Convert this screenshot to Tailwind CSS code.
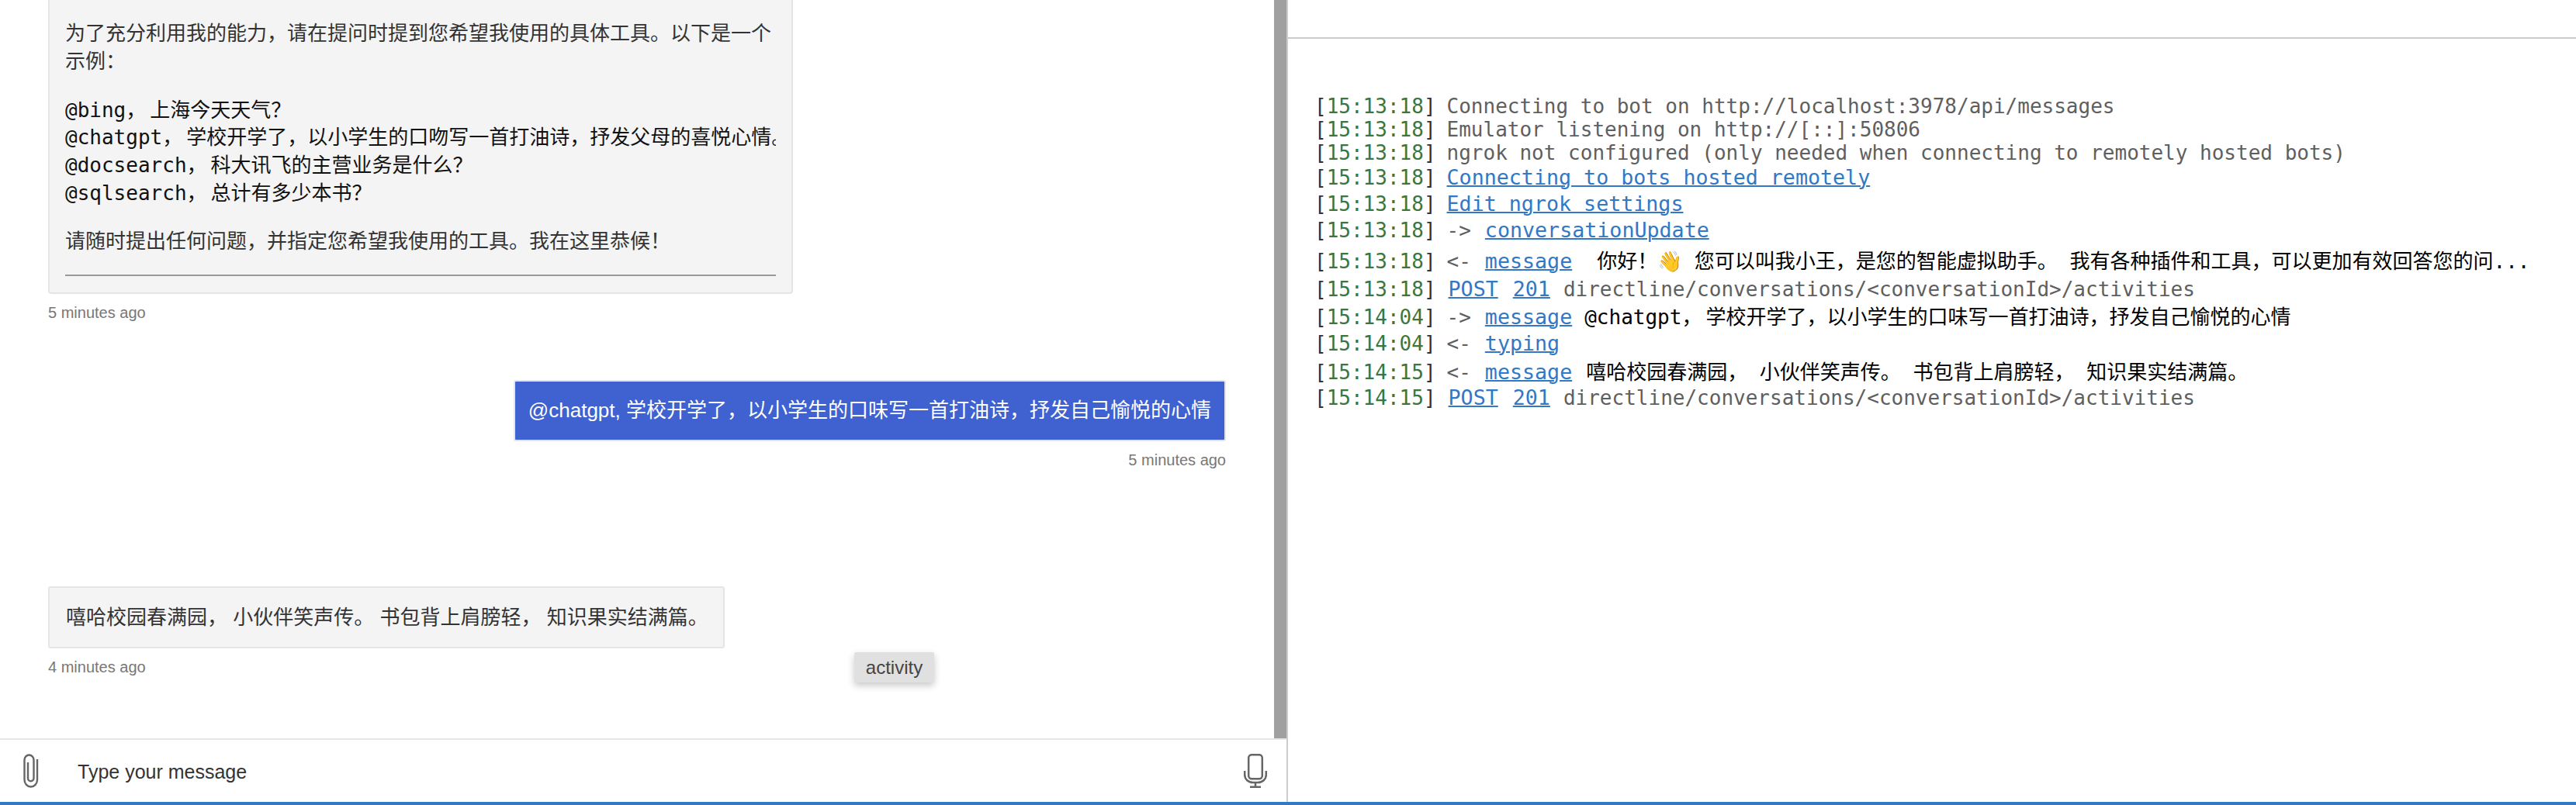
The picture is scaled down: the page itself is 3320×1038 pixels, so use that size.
<!DOCTYPE html>
<html lang="zh">
<head>
  <meta charset="UTF-8">
  <title>Bot Framework Emulator</title>
  <script src="https://cdn.jsdelivr.net/npm/@tailwindcss/browser@4"></script>
</head>
<body class="bg-white h-[1038px] w-[3320px] overflow-hidden flex flex-col font-['Liberation_Sans','Noto_Sans_CJK_SC',sans-serif] text-[#333]">
  <div class="flex flex-1 min-h-0">

    <!-- chat -->
    <div class="w-[1660px] shrink-0 flex flex-col border-r-2 border-[#ccc]">
      <div class="flex-1 min-h-0 flex">
        <div class="relative flex-1 min-w-0 px-[62px] overflow-hidden">
          <div class="border-x-2 border-b-2 border-[#e5e5e5] rounded-b-[4px] bg-[#f4f4f4] w-[960px] pl-[20px] pr-[20px] pt-[25px] pb-[21px] text-[26px] leading-[36.4px]">
            <p>为了充分利用我的能力，请在提问时提到您希望我使用的具体工具。以下是一个示例：</p>
            <div class="mt-[27px] overflow-hidden leading-[35.6px] font-['DejaVu_Sans_Mono','Noto_Sans_CJK_SC',monospace] text-[26px] text-[#111] whitespace-nowrap">
              <div class="flex"><span>@bing</span><span class="w-[31px] shrink-0">，</span><span>上海今天天气？</span></div>
              <div class="flex"><span>@chatgpt</span><span class="w-[31px] shrink-0">，</span><span>学校开学了，以小学生的口吻写一首打油诗，抒发父母的喜悦心情。</span></div>
              <div class="flex"><span>@docsearch</span><span class="w-[31px] shrink-0">，</span><span>科大讯飞的主营业务是什么？</span></div>
              <div class="flex"><span>@sqlsearch</span><span class="w-[31px] shrink-0">，</span><span>总计有多少本书？</span></div>
            </div>
            <p class="mt-[26px]">请随时提出任何问题，并指定您希望我使用的工具。我在这里恭候！</p>
            <hr class="mt-[24px] border-t-2 border-[#999]">
          </div>
          <div class="mt-[12px] text-[20px] leading-[24px] text-[#777]">5 minutes ago</div>

          <div class="mt-[75px] flex justify-end">
            <div class="border-2 border-[#e5e5e5] rounded-[3px] bg-[#3f62d0] text-white px-[17px] py-[18px] text-[26px] leading-[39px] whitespace-nowrap">@chatgpt, 学校开学了，以小学生的口味写一首打油诗，抒发自己愉悦的心情</div>
          </div>
          <div class="mt-[12px] text-[20px] leading-[24px] text-[#777] text-right">5 minutes ago</div>

          <div class="mt-[151px] inline-block border-2 border-[#e5e5e5] rounded-[3px] bg-[#f4f4f4] pl-[21px] pr-[19px] py-[18px] text-[26px] leading-[40px]">嘻哈校园春满园， 小伙伴笑声传。 书包背上肩膀轻， 知识果实结满篇。</div>
          <div class="mt-[12px] text-[20px] leading-[24px] text-[#777]">4 minutes ago</div>

          <div class="absolute left-[1101px] top-[841px] w-[103px] h-[39px] flex items-center justify-center bg-[#e0e0e0] rounded-[2px] shadow-[0_4px_10px_rgba(0,0,0,0.22)] text-[24px] text-[#444]">activity</div>
        </div>
        <div class="w-[16px] shrink-0 bg-[#a0a0a0]"></div>
      </div>

      <div class="h-[82px] shrink-0 border-t-2 border-[#e5e5e5] flex items-center">
        <svg class="ml-[30px] w-[20px] h-[44px] shrink-0" viewBox="0 0 20 44" fill="none" stroke="#666" stroke-width="2.4">
          <path d="M18 7V33.5A8.25 9 0 0 1 1.5 33.5V8A6 6.5 0 0 1 13.5 8V31.5A3.75 3.75 0 0 1 6 31.5V11"/>
        </svg>
        <div class="ml-[50px] flex-1 text-[25px] text-[#333] mt-[4px]">Type your message</div>
        <svg class="mr-[25px] w-[30px] h-[44px] shrink-0" viewBox="0 0 30 44" fill="none" stroke="#666" stroke-width="2.5">
          <rect x="6.2" y="1.2" width="17.6" height="31" rx="4"/>
          <path d="M1.2 22V27C1.2 33 6 37 12 37H18C24 37 28.8 33 28.8 27V22M15 37V42.5M8 42.7H22"/>
        </svg>
      </div>
    </div>

    <!-- log -->
    <div class="flex-1 min-w-0 flex flex-col">
      <div class="h-[50px] shrink-0 border-b-2 border-[#ccc]"></div>
      <div class="pl-[34px] pt-[72px] text-[26px] font-['DejaVu_Sans_Mono','Noto_Sans_CJK_SC',monospace] text-[#5f5f5f]">
        <div class="flex items-center h-[30px] whitespace-pre">
          <span class="text-[#333]">[<span class="text-[#3c763d]">15:13:18</span>]</span>
          <span class="ml-[14px]">Connecting to bot on http://localhost:3978/api/messages</span>
        </div>
        <div class="flex items-center h-[30px] whitespace-pre">
          <span class="text-[#333]">[<span class="text-[#3c763d]">15:13:18</span>]</span>
          <span class="ml-[14px]">Emulator listening on http://[::]:50806</span>
        </div>
        <div class="flex items-center h-[30px] whitespace-pre">
          <span class="text-[#333]">[<span class="text-[#3c763d]">15:13:18</span>]</span>
          <span class="ml-[14px]">ngrok not configured (only needed when connecting to remotely hosted bots)</span>
        </div>
        <div class="flex items-center h-[30px] mt-[2px] whitespace-pre">
          <span class="text-[#333]">[<span class="text-[#3c763d]">15:13:18</span>]</span>
          <a class="ml-[14px] text-[26.67px] text-[#3178c6] underline decoration-2">Connecting to bots hosted remotely</a>
        </div>
        <div class="flex items-center h-[30px] mt-[4px] whitespace-pre">
          <span class="text-[#333]">[<span class="text-[#3c763d]">15:13:18</span>]</span>
          <a class="ml-[14px] text-[26.67px] text-[#3178c6] underline decoration-2">Edit ngrok settings</a>
        </div>
        <div class="flex items-center h-[30px] mt-[4px] whitespace-pre">
          <span class="text-[#333]">[<span class="text-[#3c763d]">15:13:18</span>]</span>
          <span class="ml-[14px]">-&gt;</span>
          <a class="ml-[18px] text-[26.67px] text-[#3178c6] underline decoration-2">conversationUpdate</a>
        </div>
        <div class="flex items-center h-[30px] mt-[10px] whitespace-pre">
          <span class="text-[#333]">[<span class="text-[#3c763d]">15:13:18</span>]</span>
          <span class="ml-[14px]">&lt;-</span>
          <a class="ml-[18px] text-[26.67px] text-[#3178c6] underline decoration-2">message</a>
          <span class="ml-[32px] text-black">你好！👋 您可以叫我小王，是您的智能虚拟助手。 我有各种插件和工具，可以更加有效回答您的问...</span>
        </div>
        <div class="flex items-center h-[30px] mt-[6px] whitespace-pre">
          <span class="text-[#333]">[<span class="text-[#3c763d]">15:13:18</span>]</span>
          <a class="ml-[16px] text-[26.67px] text-[#3178c6] underline decoration-2">POST</a>
          <a class="ml-[19px] text-[26.67px] text-[#3178c6] underline decoration-2">201</a>
          <span class="ml-[17px]">directline/conversations/&lt;conversationId&gt;/activities</span>
        </div>
        <div class="flex items-center h-[30px] mt-[6px] whitespace-pre">
          <span class="text-[#333]">[<span class="text-[#3c763d]">15:14:04</span>]</span>
          <span class="ml-[14px]">-&gt;</span>
          <a class="ml-[18px] text-[26.67px] text-[#3178c6] underline decoration-2">message</a>
          <span class="ml-[16px] text-black">@chatgpt</span><span class="w-[31px] shrink-0 text-black">，</span><span class="text-black">学校开学了，以小学生的口味写一首打油诗，抒发自己愉悦的心情</span>
        </div>
        <div class="flex items-center h-[30px] mt-[4px] whitespace-pre">
          <span class="text-[#333]">[<span class="text-[#3c763d]">15:14:04</span>]</span>
          <span class="ml-[14px]">&lt;-</span>
          <a class="ml-[18px] text-[26.67px] text-[#3178c6] underline decoration-2">typing</a>
        </div>
        <div class="flex items-center h-[30px] mt-[7px] whitespace-pre">
          <span class="text-[#333]">[<span class="text-[#3c763d]">15:14:15</span>]</span>
          <span class="ml-[14px]">&lt;-</span>
          <a class="ml-[18px] text-[26.67px] text-[#3178c6] underline decoration-2">message</a>
          <span class="ml-[18px] text-black">嘻哈校园春满园， 小伙伴笑声传。 书包背上肩膀轻， 知识果实结满篇。</span>
        </div>
        <div class="flex items-center h-[30px] mt-[3px] whitespace-pre">
          <span class="text-[#333]">[<span class="text-[#3c763d]">15:14:15</span>]</span>
          <a class="ml-[16px] text-[26.67px] text-[#3178c6] underline decoration-2">POST</a>
          <a class="ml-[19px] text-[26.67px] text-[#3178c6] underline decoration-2">201</a>
          <span class="ml-[17px]">directline/conversations/&lt;conversationId&gt;/activities</span>
        </div>
      </div>
    </div>
  </div>
  <div class="h-[4px] shrink-0 bg-[#3178c6]"></div>
</body>
</html>
